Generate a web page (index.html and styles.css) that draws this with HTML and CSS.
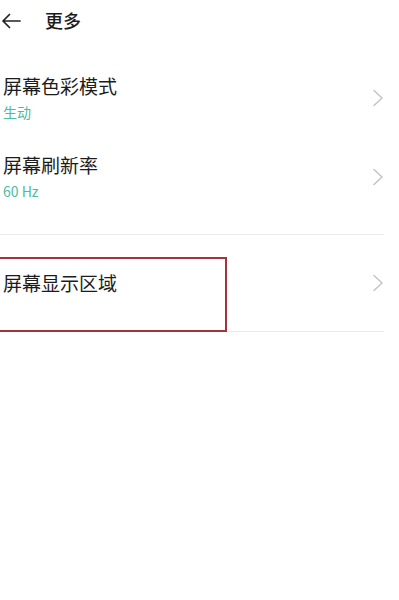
FILE: index.html
```html
<!DOCTYPE html>
<html lang="zh-CN">
<head>
<meta charset="utf-8">
<title>更多</title>
<link rel="stylesheet" href="styles.css">
</head>
<body>
<div class="page">
  <header class="topbar">
    <svg class="back" width="20" height="16" viewBox="0 0 20 16" aria-hidden="true">
      <path d="M19 8H2M8.5 1.5L2 8l6.5 6.5" fill="none" stroke="#222" stroke-width="1.7" stroke-linecap="round" stroke-linejoin="round"/>
    </svg>
    <h1 class="title">更多</h1>
  </header>

  <div class="list">
    <div class="row">
      <div class="texts">
        <div class="label">屏幕色彩模式</div>
        <div class="sub">生动</div>
      </div>
      <svg class="chev" width="12" height="18" viewBox="0 0 12 18" aria-hidden="true"><path d="M2 1.5L10 9l-8 7.5" fill="none" stroke="#c4c4c4" stroke-width="1.5" stroke-linecap="round" stroke-linejoin="round"/></svg>
    </div>
    <div class="row">
      <div class="texts">
        <div class="label">屏幕刷新率</div>
        <div class="sub">60 Hz</div>
      </div>
      <svg class="chev" width="12" height="18" viewBox="0 0 12 18" aria-hidden="true"><path d="M2 1.5L10 9l-8 7.5" fill="none" stroke="#c4c4c4" stroke-width="1.5" stroke-linecap="round" stroke-linejoin="round"/></svg>
    </div>
    <div class="divider first"></div>
    <div class="row tall">
      <div class="texts">
        <div class="label">屏幕显示区域</div>
      </div>
      <svg class="chev" width="12" height="18" viewBox="0 0 12 18" aria-hidden="true"><path d="M2 1.5L10 9l-8 7.5" fill="none" stroke="#c4c4c4" stroke-width="1.5" stroke-linecap="round" stroke-linejoin="round"/></svg>
      <div class="highlight"></div>
    </div>
    <div class="divider"></div>
  </div>
</div>
</body>
</html>
```

FILE: styles.css
```css
html, body {
  margin: 0;
  padding: 0;
  background: #ffffff;
}
body {
  font-family: "Noto Sans CJK SC", "Noto Sans", "Liberation Sans", sans-serif;
  color: #1c1c1c;
  overflow: hidden;
}
.page {
  width: 399px;
  height: 600px;
}
.topbar {
  height: 40px;
  display: flex;
  align-items: center;
  padding-left: 1px;
}
.back {
  display: block;
  margin-top: 1px;
}
.title {
  margin: 0 0 0 24px;
  font-size: 18px;
  font-weight: 500;
  line-height: 24px;
  color: #1c1c1c;
}
.list {
  margin-top: 18px;
}
.row {
  position: relative;
  height: 79px;
  display: flex;
  align-items: center;
  justify-content: space-between;
  padding: 0 15px 0 3px;
}
.row.tall {
  height: 96px;
}
.texts {
  display: flex;
  flex-direction: column;
}
.label {
  font-size: 19px;
  line-height: 24px;
  color: #1c1c1c;
}
.sub {
  margin-top: 5px;
  font-size: 14px;
  line-height: 18px;
  color: #4dbba1;
  font-weight: 400;
}
.chev {
  display: block;
  flex: none;
}
.divider {
  height: 1px;
  background: #ebebeb;
  margin-right: 15px;
}
.divider.first {
  margin-top: 18px;
}
.highlight {
  position: absolute;
  left: -4px;
  top: 22px;
  width: 227px;
  height: 71px;
  border: 2px solid #a3333f;
}
```
